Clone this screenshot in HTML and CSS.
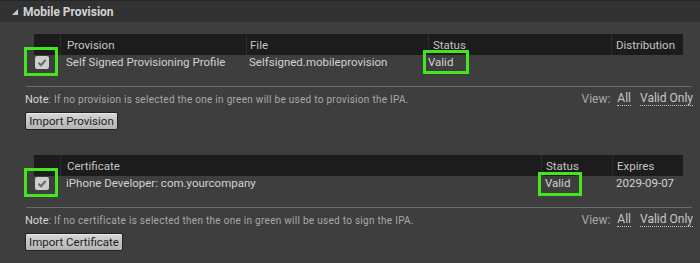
FILE: index.html
```html
<!DOCTYPE html>
<html>
<head>
<meta charset="utf-8">
<link rel="stylesheet" href="styles.css">
</head>
<body>
<div class="page">
  <div class="section-header">
    <span class="tri"></span>
    <span class="title">Mobile Provision</span>
  </div>
  <div class="section-body">
    <div class="block block-first">
      <div class="table t1">
        <div class="thead">
          <div class="cell c-check"></div>
          <div class="cell c-prov">Provision</div>
          <div class="cell c-file">File</div>
          <div class="cell c-status">Status</div>
          <div class="cell c-dist">Distribution</div>
        </div>
        <div class="trow">
          <div class="cell c-check"><span class="checkbox"><svg viewBox="0 0 14 13" width="14" height="13"><path d="M3.5 6.8 L6 9.2 L10.6 4" fill="none" stroke="#6a6a6a" stroke-width="2"/></svg></span><span class="hl hl-check"></span></div>
          <div class="cell c-prov">Self Signed Provisioning Profile</div>
          <div class="cell c-file">Selfsigned.mobileprovision</div>
          <div class="cell c-status c-status-row">Valid<span class="hl hl-valid1"></span></div>
          <div class="cell c-dist"></div>
        </div>
      </div>
      <div class="sep"></div>
      <div class="note-row">
        <div class="note"><span class="note-label">Note</span>: If no provision is selected the one in green will be used to provision the IPA.</div>
        <div class="view">View:<span class="vlink">All</span><span class="vlink">Valid Only</span></div>
      </div>
      <button class="btn">Import Provision</button>
    </div>

    <div class="block block-second">
      <div class="table t2">
        <div class="thead">
          <div class="cell c-check"></div>
          <div class="cell c-cert">Certificate</div>
          <div class="cell c-status2">Status</div>
          <div class="cell c-exp">Expires</div>
        </div>
        <div class="trow">
          <div class="cell c-check"><span class="checkbox"><svg viewBox="0 0 14 13" width="14" height="13"><path d="M3.5 6.8 L6 9.2 L10.6 4" fill="none" stroke="#6a6a6a" stroke-width="2"/></svg></span><span class="hl hl-check2"></span></div>
          <div class="cell c-cert">iPhone Developer: com.yourcompany</div>
          <div class="cell c-status2">Valid<span class="hl hl-valid2"></span></div>
          <div class="cell c-exp">2029-09-07</div>
        </div>
      </div>
      <div class="sep"></div>
      <div class="note-row">
        <div class="note"><span class="note-label">Note</span>: If no certificate is selected then the one in green will be used to sign the IPA.</div>
        <div class="view">View:<span class="vlink">All</span><span class="vlink">Valid Only</span></div>
      </div>
      <button class="btn btn2">Import Certificate</button>
    </div>
  </div>
</div>
</body>
</html>
```

FILE: styles.css
```css
html, body {
  margin: 0;
  padding: 0;
  background: #3e3e3e;
}
body {
  font-family: Roboto, "Liberation Sans", sans-serif;
  color: #d8d8d8;
  width: 700px;
  height: 263px;
  overflow: hidden;
}
.page {
  width: 700px;
}
.section-header {
  background: #323232;
  border-top: 1px solid #262626;
  display: flex;
  align-items: center;
  padding-left: 12px;
  box-sizing: border-box;
  height: 22px;
}
.tri {
  width: 0;
  height: 0;
  border-left: 6px solid transparent;
  border-bottom: 6px solid #c8c8c8;
  margin-right: 5px;
  margin-top: 1px;
}
.title {
  font-weight: bold;
  font-size: 12px;
  color: #d4d4d4;
}
.section-body {
  padding-top: 12px;
}
.block {
  display: flex;
  flex-direction: column;
  align-items: flex-start;
}
.block-second {
  margin-top: 25px;
}
.table {
  margin-left: 34px;
  width: 649px;
}
.thead, .trow {
  display: grid;
}
.t1 .thead, .t1 .trow {
  grid-template-columns: 26px 186px 182px 183px 72px;
}
.t2 .thead, .t2 .trow {
  grid-template-columns: 26px 481px 71px 71px;
}
.thead {
  height: 21px;
  background: #1c1c1c;
  font-size: 11.5px;
  color: #c4c4c4;
}
.thead .cell {
  border-left: 1px solid #2c2c2c;
  display: flex;
  align-items: center;
}
.thead .cell:first-child {
  border-left: none;
}
.trow {
  height: 25px;
  font-size: 11.5px;
  color: #d2d2d2;
}
.trow .cell {
  display: flex;
  align-items: flex-start;
  position: relative;
  line-height: 14px;
}
.cell {
  box-sizing: border-box;
  white-space: nowrap;
}
.c-prov, .c-cert { padding-left: 6px; }
.c-file { padding-left: 3px; }
.c-status { padding-left: 4px; }
.c-status-row { padding-left: 0; }
.c-dist { padding-left: 4px; }
.c-status2 { padding-left: 4px; }
.c-exp { padding-left: 4px; }
.checkbox {
  width: 14px;
  height: 13px;
  background: #cdcdcd;
  border-radius: 2px;
  margin-left: 1px;
  margin-top: 1px;
  display: block;
}
.checkbox svg { display: block; }
.hl {
  position: absolute;
  border: 3px solid #44e51c;
  box-sizing: border-box;
  pointer-events: none;
}
.hl-check, .hl-check2 {
  left: -10px;
  top: -8px;
  width: 34px;
  height: 29px;
}
.hl-valid1 {
  left: -5px;
  top: -5px;
  width: 46px;
  height: 24px;
}
.hl-valid2 {
  left: -3px;
  top: -4px;
  width: 44px;
  height: 24px;
}
.sep {
  margin-left: 26px;
  width: 666px;
  height: 1px;
  background: #6a6a6a;
  margin-top: 6px;
}
.note-row {
  margin-left: 25px;
  width: 668px;
  display: flex;
  justify-content: space-between;
  align-items: center;
  height: 24px;
  font-size: 10px;
  letter-spacing: 0.28px;
  color: #a9a9a9;
}
.note-label {
  color: #d6d6d6;
  font-size: 11px;
  letter-spacing: 0;
}
.view {
  font-size: 12px;
  letter-spacing: 0;
  color: #a9a9a9;
  display: flex;
}
.vlink {
  color: #c8c8c8;
  border-bottom: 1px dotted #c8c8c8;
  margin-left: 7px;
  line-height: 13px;
}
.vlink + .vlink {
  margin-left: 9px;
}
.btn {
  margin-left: 25px;
  margin-top: 1px;
  height: 18px;
  width: 93px;
  padding: 0;
  font-family: Roboto, "Liberation Sans", sans-serif;
  font-size: 11.5px;
  color: #1e1e1e;
  background: linear-gradient(#d6d6d6, #b4b4b4);
  border: 1px solid #232323;
  border-radius: 2px;
  box-shadow: inset 0 1px 0 #e8e8e8;
}
.btn2 {
  width: 98px;
}
```
